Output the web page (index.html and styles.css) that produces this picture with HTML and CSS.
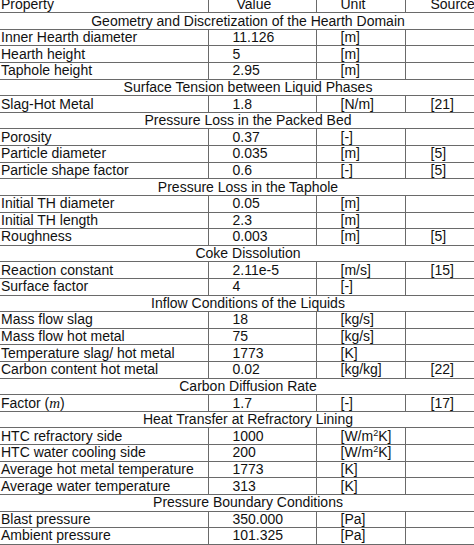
FILE: index.html
```html
<!DOCTYPE html>
<html>
<head>
<meta charset="utf-8">
<link rel="stylesheet" href="styles.css">
</head>
<body>
<div class="frame">
<table class="params">
<colgroup><col class="c1"><col class="c2"><col class="c3"><col class="c4"></colgroup>
<tr class="head"><td class="p">Property</td><td class="vh">Value</td><td class="u">Unit</td><td class="s">Source</td></tr>
<tr><td class="sec" colspan="4">Geometry and Discretization of the Hearth Domain</td></tr>
<tr><td class="p">Inner Hearth diameter</td><td class="v">11.126</td><td class="u">[m]</td><td class="s"></td></tr>
<tr><td class="p">Hearth height</td><td class="v">5</td><td class="u">[m]</td><td class="s"></td></tr>
<tr><td class="p">Taphole height</td><td class="v">2.95</td><td class="u">[m]</td><td class="s"></td></tr>
<tr><td class="sec" colspan="4">Surface Tension between Liquid Phases</td></tr>
<tr><td class="p">Slag-Hot Metal</td><td class="v">1.8</td><td class="u">[N/m]</td><td class="s">[21]</td></tr>
<tr><td class="sec" colspan="4">Pressure Loss in the Packed Bed</td></tr>
<tr><td class="p">Porosity</td><td class="v">0.37</td><td class="u">[-]</td><td class="s"></td></tr>
<tr><td class="p">Particle diameter</td><td class="v">0.035</td><td class="u">[m]</td><td class="s">[5]</td></tr>
<tr><td class="p">Particle shape factor</td><td class="v">0.6</td><td class="u">[-]</td><td class="s">[5]</td></tr>
<tr><td class="sec" colspan="4">Pressure Loss in the Taphole</td></tr>
<tr><td class="p">Initial TH diameter</td><td class="v">0.05</td><td class="u">[m]</td><td class="s"></td></tr>
<tr><td class="p">Initial TH length</td><td class="v">2.3</td><td class="u">[m]</td><td class="s"></td></tr>
<tr><td class="p">Roughness</td><td class="v">0.003</td><td class="u">[m]</td><td class="s">[5]</td></tr>
<tr><td class="sec" colspan="4">Coke Dissolution</td></tr>
<tr><td class="p">Reaction constant</td><td class="v">2.11e-5</td><td class="u">[m/s]</td><td class="s">[15]</td></tr>
<tr><td class="p">Surface factor</td><td class="v">4</td><td class="u">[-]</td><td class="s"></td></tr>
<tr><td class="sec" colspan="4">Inflow Conditions of the Liquids</td></tr>
<tr><td class="p">Mass flow slag</td><td class="v">18</td><td class="u">[kg/s]</td><td class="s"></td></tr>
<tr><td class="p">Mass flow hot metal</td><td class="v">75</td><td class="u">[kg/s]</td><td class="s"></td></tr>
<tr><td class="p">Temperature slag/ hot metal</td><td class="v">1773</td><td class="u">[K]</td><td class="s"></td></tr>
<tr><td class="p">Carbon content hot metal</td><td class="v">0.02</td><td class="u">[kg/kg]</td><td class="s">[22]</td></tr>
<tr><td class="sec" colspan="4">Carbon Diffusion Rate</td></tr>
<tr><td class="p">Factor (<span class="math">m</span>)</td><td class="v">1.7</td><td class="u">[-]</td><td class="s">[17]</td></tr>
<tr><td class="sec" colspan="4">Heat Transfer at Refractory Lining</td></tr>
<tr><td class="p">HTC refractory side</td><td class="v">1000</td><td class="u">[W/m<sup>2</sup>K]</td><td class="s"></td></tr>
<tr><td class="p">HTC water cooling side</td><td class="v">200</td><td class="u">[W/m<sup>2</sup>K]</td><td class="s"></td></tr>
<tr><td class="p">Average hot metal temperature</td><td class="v">1773</td><td class="u">[K]</td><td class="s"></td></tr>
<tr><td class="p">Average water temperature</td><td class="v">313</td><td class="u">[K]</td><td class="s"></td></tr>
<tr><td class="sec" colspan="4">Pressure Boundary Conditions</td></tr>
<tr><td class="p">Blast pressure</td><td class="v">350.000</td><td class="u">[Pa]</td><td class="s"></td></tr>
<tr><td class="p">Ambient pressure</td><td class="v">101.325</td><td class="u">[Pa]</td><td class="s"></td></tr>
</table>
</div>
</body>
</html>
```
FILE: styles.css
```css
html, body {
  margin: 0;
  padding: 0;
  background: #fff;
}
.frame {
  width: 474px;
  height: 545px;
  overflow: hidden;
}
.params {
  margin-top: -3.4px;
  width: 496px;
  table-layout: fixed;
  border-collapse: collapse;
  font-family: "Liberation Sans", Arial, sans-serif;
  font-size: 14px;
  color: #111;
}
.c1 { width: 208px; }
.c2 { width: 108px; }
.c3 { width: 89px; }
.c4 { width: 91px; }
.params td {
  padding: 0;
  height: 15.62px;
  line-height: 15px;
  white-space: nowrap;
  vertical-align: middle;
  border-top: 1px solid #6a6a6a;
  border-bottom: 1px solid #6a6a6a;
}
.params td + td {
  border-left: 1px solid #6a6a6a;
}
.params .head td {
  border-top: none;
}
.p { padding-left: 1px !important; }
.v { padding-left: 24px !important; }
.vh { padding-left: 28px !important; }
.u { padding-left: 24px !important; }
.s { padding-left: 25px !important; }
.sec {
  text-align: center;
}
.math {
  font-family: "Liberation Serif", "Times New Roman", serif;
  font-style: italic;
  font-size: 15px;
}
sup {
  font-size: 9px;
  line-height: 0;
  vertical-align: 5px;
}
```
